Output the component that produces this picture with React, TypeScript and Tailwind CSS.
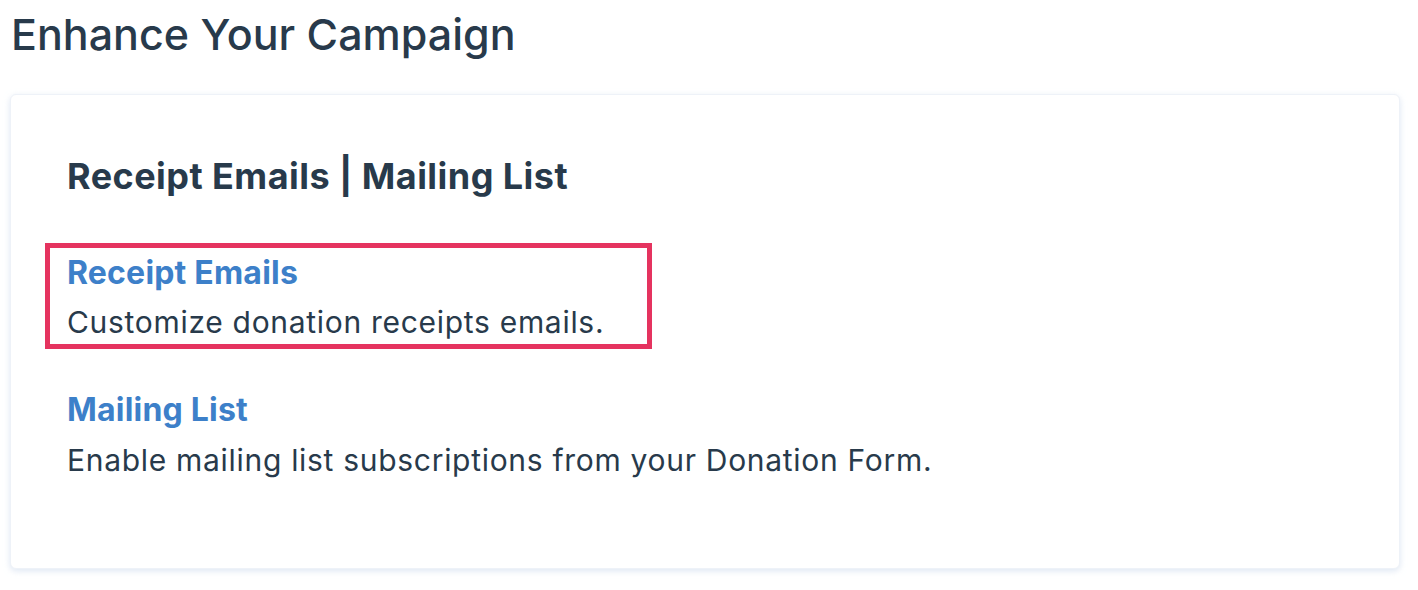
export default function App() {
  return (
    <div className="min-h-[590px] w-[1418px] bg-white font-['Inter','Noto_Sans',sans-serif] text-[#283a4b]">
      <div className="px-[10px] pt-[8px]">
        <h1 className="pl-[1px] text-[43px] leading-[52px] font-medium">Enhance Your Campaign</h1>
        <div className="mt-[34px] h-[475px] w-[1390px] rounded-[6px] border border-[#eef2f8] bg-white pl-[56px] pt-[59px] shadow-[0_2px_6px_rgba(200,215,235,0.6)]">
          <h2 className="text-[36px] leading-[44px] font-bold tracking-[0.45px]">Receipt Emails | Mailing List</h2>
          <div className="mt-[45px] -ml-[22px] w-[607px] border-[5px] border-[#e5335f] pl-[17px] pt-[5px] pb-[4px]">
            <div className="text-[32px] leading-[39px] font-bold text-[#3d80c9] tracking-[0.2px]">Receipt Emails</div>
            <div className="mt-[12px] text-[30px] leading-[36px] tracking-[0.7px]">Customize donation receipts emails.</div>
          </div>
          <div className="mt-[41px] text-[32px] leading-[39px] font-bold text-[#3d80c9] tracking-[0.2px]">Mailing List</div>
          <div className="mt-[13px] text-[30px] leading-[36px] tracking-[0.7px]">Enable mailing list subscriptions from your Donation Form.</div>
        </div>
      </div>
    </div>
  );
}
